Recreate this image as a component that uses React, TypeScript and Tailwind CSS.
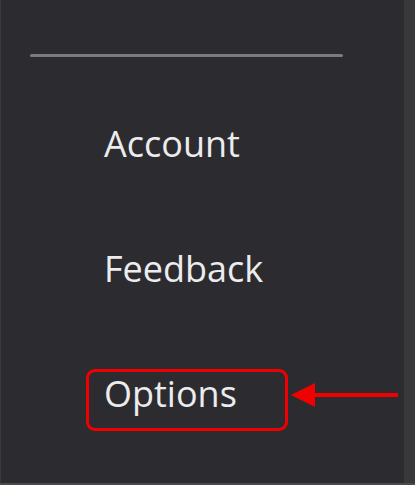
const items = ["Account", "Feedback", "Options"];

function Arrow() {
  return (
    <svg
      className="absolute left-[291px] top-[382px]"
      width="108"
      height="26"
      viewBox="0 0 108 26"
    >
      <line x1="20" y1="13" x2="107" y2="13" stroke="#f00000" strokeWidth="4" />
      <polygon points="0,13 24,1 24,25" fill="#f00000" />
    </svg>
  );
}

export default function App() {
  return (
    <div className="relative w-[415px] h-[485px] flex flex-col bg-[#2c2c30] font-['Open_Sans',sans-serif]">
      <div className="flex flex-1">
        <div className="w-px bg-[#3a3a3d]" />
        <div className="flex-1 flex flex-col">
          <div className="ml-[29px] mt-[54px] w-[313px] h-[3px] rounded-full bg-[#7b7b7d]" />
          <ul className="flex flex-col gap-[75px] mt-[62px] pl-[103px]">
            {items.map((item) => (
              <li
                key={item}
                className="text-[36px] leading-[50px] text-[#ececee]"
              >
                {item}
              </li>
            ))}
          </ul>
        </div>
        <div className="w-[11px] bg-[#38383b]" />
      </div>
      <div className="h-[2px] bg-[#4a4a4d]" />

      <div className="absolute left-[86px] top-[369px] w-[202px] h-[62px] rounded-[9px] border-[3px] border-[#f00000]" />
      <Arrow />
    </div>
  );
}
